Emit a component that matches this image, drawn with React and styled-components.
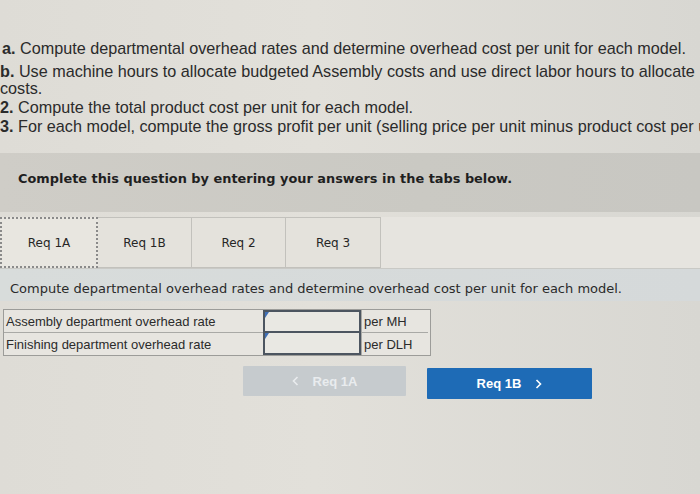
import React from "react";
import styled, { createGlobalStyle } from "styled-components";

const Global = createGlobalStyle`
  html, body { margin: 0; padding: 0; }
  body {
    width: 700px;
    height: 494px;
    overflow: hidden;
    background: linear-gradient(90deg, #dedcd6 0%, #e2e0da 45%, #d8d7d2 100%);
    font-family: "Liberation Sans", Arial, sans-serif;
  }
`;

const Page = styled.div`
  width: 700px;
  height: 494px;
  display: flex;
  flex-direction: column;
`;

const Questions = styled.div`
  padding: 39px 0 0 0;
  font-family: "Liberation Sans", Arial, sans-serif;
  font-size: 16.2px;
  line-height: 19px;
  color: #2b2b2b;
  white-space: nowrap;
  overflow: hidden;
`;

const Line = styled.div`
  margin-left: ${(p) => p.$indent || 0}px;
  margin-top: ${(p) => p.$gap || 0}px;
  b { font-weight: 700; }
`;

const Banner = styled.div`
  margin-top: 17px;
  height: 59px;
  box-sizing: border-box;
  padding: 17px 0 0 18px;
  background: linear-gradient(90deg, #cfcdc7 0%, #cac9c3 60%, #c8c7c2 100%);
  font-family: "DejaVu Sans", Verdana, sans-serif;
  font-weight: 700;
  font-size: 12.9px;
  line-height: 18px;
  color: #1f1f1f;
`;

const TabBar = styled.div`
  margin-top: 5px;
  display: flex;
  height: 51px;
  background: #e6e4df;
`;

const Tab = styled.div`
  width: ${(p) => p.$w}px;
  box-sizing: border-box;
  display: flex;
  align-items: center;
  justify-content: center;
  font-family: "DejaVu Sans", Verdana, sans-serif;
  font-size: 12px;
  color: #262626;
  background: #e4e2dc;
  border: 1px solid #c2c1bc;
  border-left: none;
  outline: ${(p) => (p.$focus ? "2px dotted #8a8a8a" : "none")};
  outline-offset: -2px;
  ${(p) => p.$focus && "border: none; background: #e8e6e0;"}
`;

const Instruction = styled.div`
  height: 33px;
  box-sizing: border-box;
  padding: 12px 0 0 10px;
  line-height: 16px;
  background: linear-gradient(90deg, #d8dcdb 0%, #d5d9da 100%);
  font-family: "DejaVu Sans", Verdana, sans-serif;
  font-size: 13px;
  color: #2a2a2a;
  border-top: 1px solid #c9c9c5;
`;

const Table = styled.div`
  margin: 8px 0 0 3px;
  width: 426px;
  display: grid;
  grid-template-columns: 259px 98px 67px;
  border: 1px solid #9c9c99;
  background: #e7e5e0;
`;

const Cell = styled.div`
  height: 22px;
  display: flex;
  align-items: center;
  padding-left: 2px;
  font-family: "Liberation Sans", Arial, sans-serif;
  font-size: 13px;
  color: #2b2b2b;
  border-bottom: ${(p) => (p.$last ? "none" : "1px solid #a9a9a6")};
  border-left: ${(p) => (p.$unit ? "1px solid #a9a9a6" : "none")};
`;

const InputCell = styled.div`
  position: relative;
  height: ${(p) => (p.$last ? 22 : 23)}px;
  box-sizing: border-box;
  border: 2px solid #4c5560;
  border-top-width: ${(p) => (p.$last ? 0 : 2)}px;
  background: #e9e8e3;
`;

const Corner = styled.span`
  position: absolute;
  top: 0;
  left: 0;
  width: 0;
  height: 0;
  border-top: 6px solid #3f6fb6;
  border-right: 4px solid transparent;
`;

const Nav = styled.div`
  margin-top: 10px;
  display: flex;
  gap: 21px;
  padding-left: 243px;
`;

const NavButton = styled.div`
  width: ${(p) => (p.$primary ? 165 : 163)}px;
  height: ${(p) => (p.$primary ? 31 : 30)}px;
  margin-top: ${(p) => (p.$primary ? 2 : 0)}px;
  box-sizing: border-box;
  display: flex;
  align-items: center;
  justify-content: center;
  gap: 14px;
  font-family: "Liberation Sans", Arial, sans-serif;
  font-weight: 700;
  font-size: 13px;
  color: ${(p) => (p.$primary ? "#ffffff" : "#e9ecee")};
  background: ${(p) => (p.$primary ? "#1e6bb6" : "#c6cbce")};
  border-radius: 1px;
`;

const Chevron = ({ dir }) => (
  <svg width="7" height="10" viewBox="0 0 7 10">
    <path
      d={dir === "left" ? "M5.5 1 L1.5 5 L5.5 9" : "M1.5 1 L5.5 5 L1.5 9"}
      fill="none"
      stroke="currentColor"
      strokeWidth="1.6"
    />
  </svg>
);

export default function App() {
  return (
    <Page>
      <Global />
      <Questions>
        <Line $indent={2}><b>a.</b> Compute departmental overhead rates and determine overhead cost per unit for each model.</Line>
        <Line $gap={4}><b>b.</b> Use machine hours to allocate budgeted Assembly costs and use direct labor hours to allocate</Line>
        <Line $gap={-2}>costs.</Line>
        <Line><b>2.</b> Compute the total product cost per unit for each model.</Line>
        <Line><b>3.</b> For each model, compute the gross profit per unit (selling price per unit minus product cost per unit).</Line>
      </Questions>
      <Banner>Complete this question by entering your answers in the tabs below.</Banner>
      <TabBar>
        <Tab $w={98} $focus>Req 1A</Tab>
        <Tab $w={94}>Req 1B</Tab>
        <Tab $w={94}>Req 2</Tab>
        <Tab $w={95}>Req 3</Tab>
      </TabBar>
      <Instruction>Compute departmental overhead rates and determine overhead cost per unit for each model.</Instruction>
      <Table>
        <Cell>Assembly department overhead rate</Cell>
        <InputCell><Corner /></InputCell>
        <Cell $unit>per MH</Cell>
        <Cell $last>Finishing department overhead rate</Cell>
        <InputCell $last><Corner /></InputCell>
        <Cell $unit $last>per DLH</Cell>
      </Table>
      <Nav>
        <NavButton><Chevron dir="left" />Req 1A</NavButton>
        <NavButton $primary>Req 1B<Chevron dir="right" /></NavButton>
      </Nav>
    </Page>
  );
}
